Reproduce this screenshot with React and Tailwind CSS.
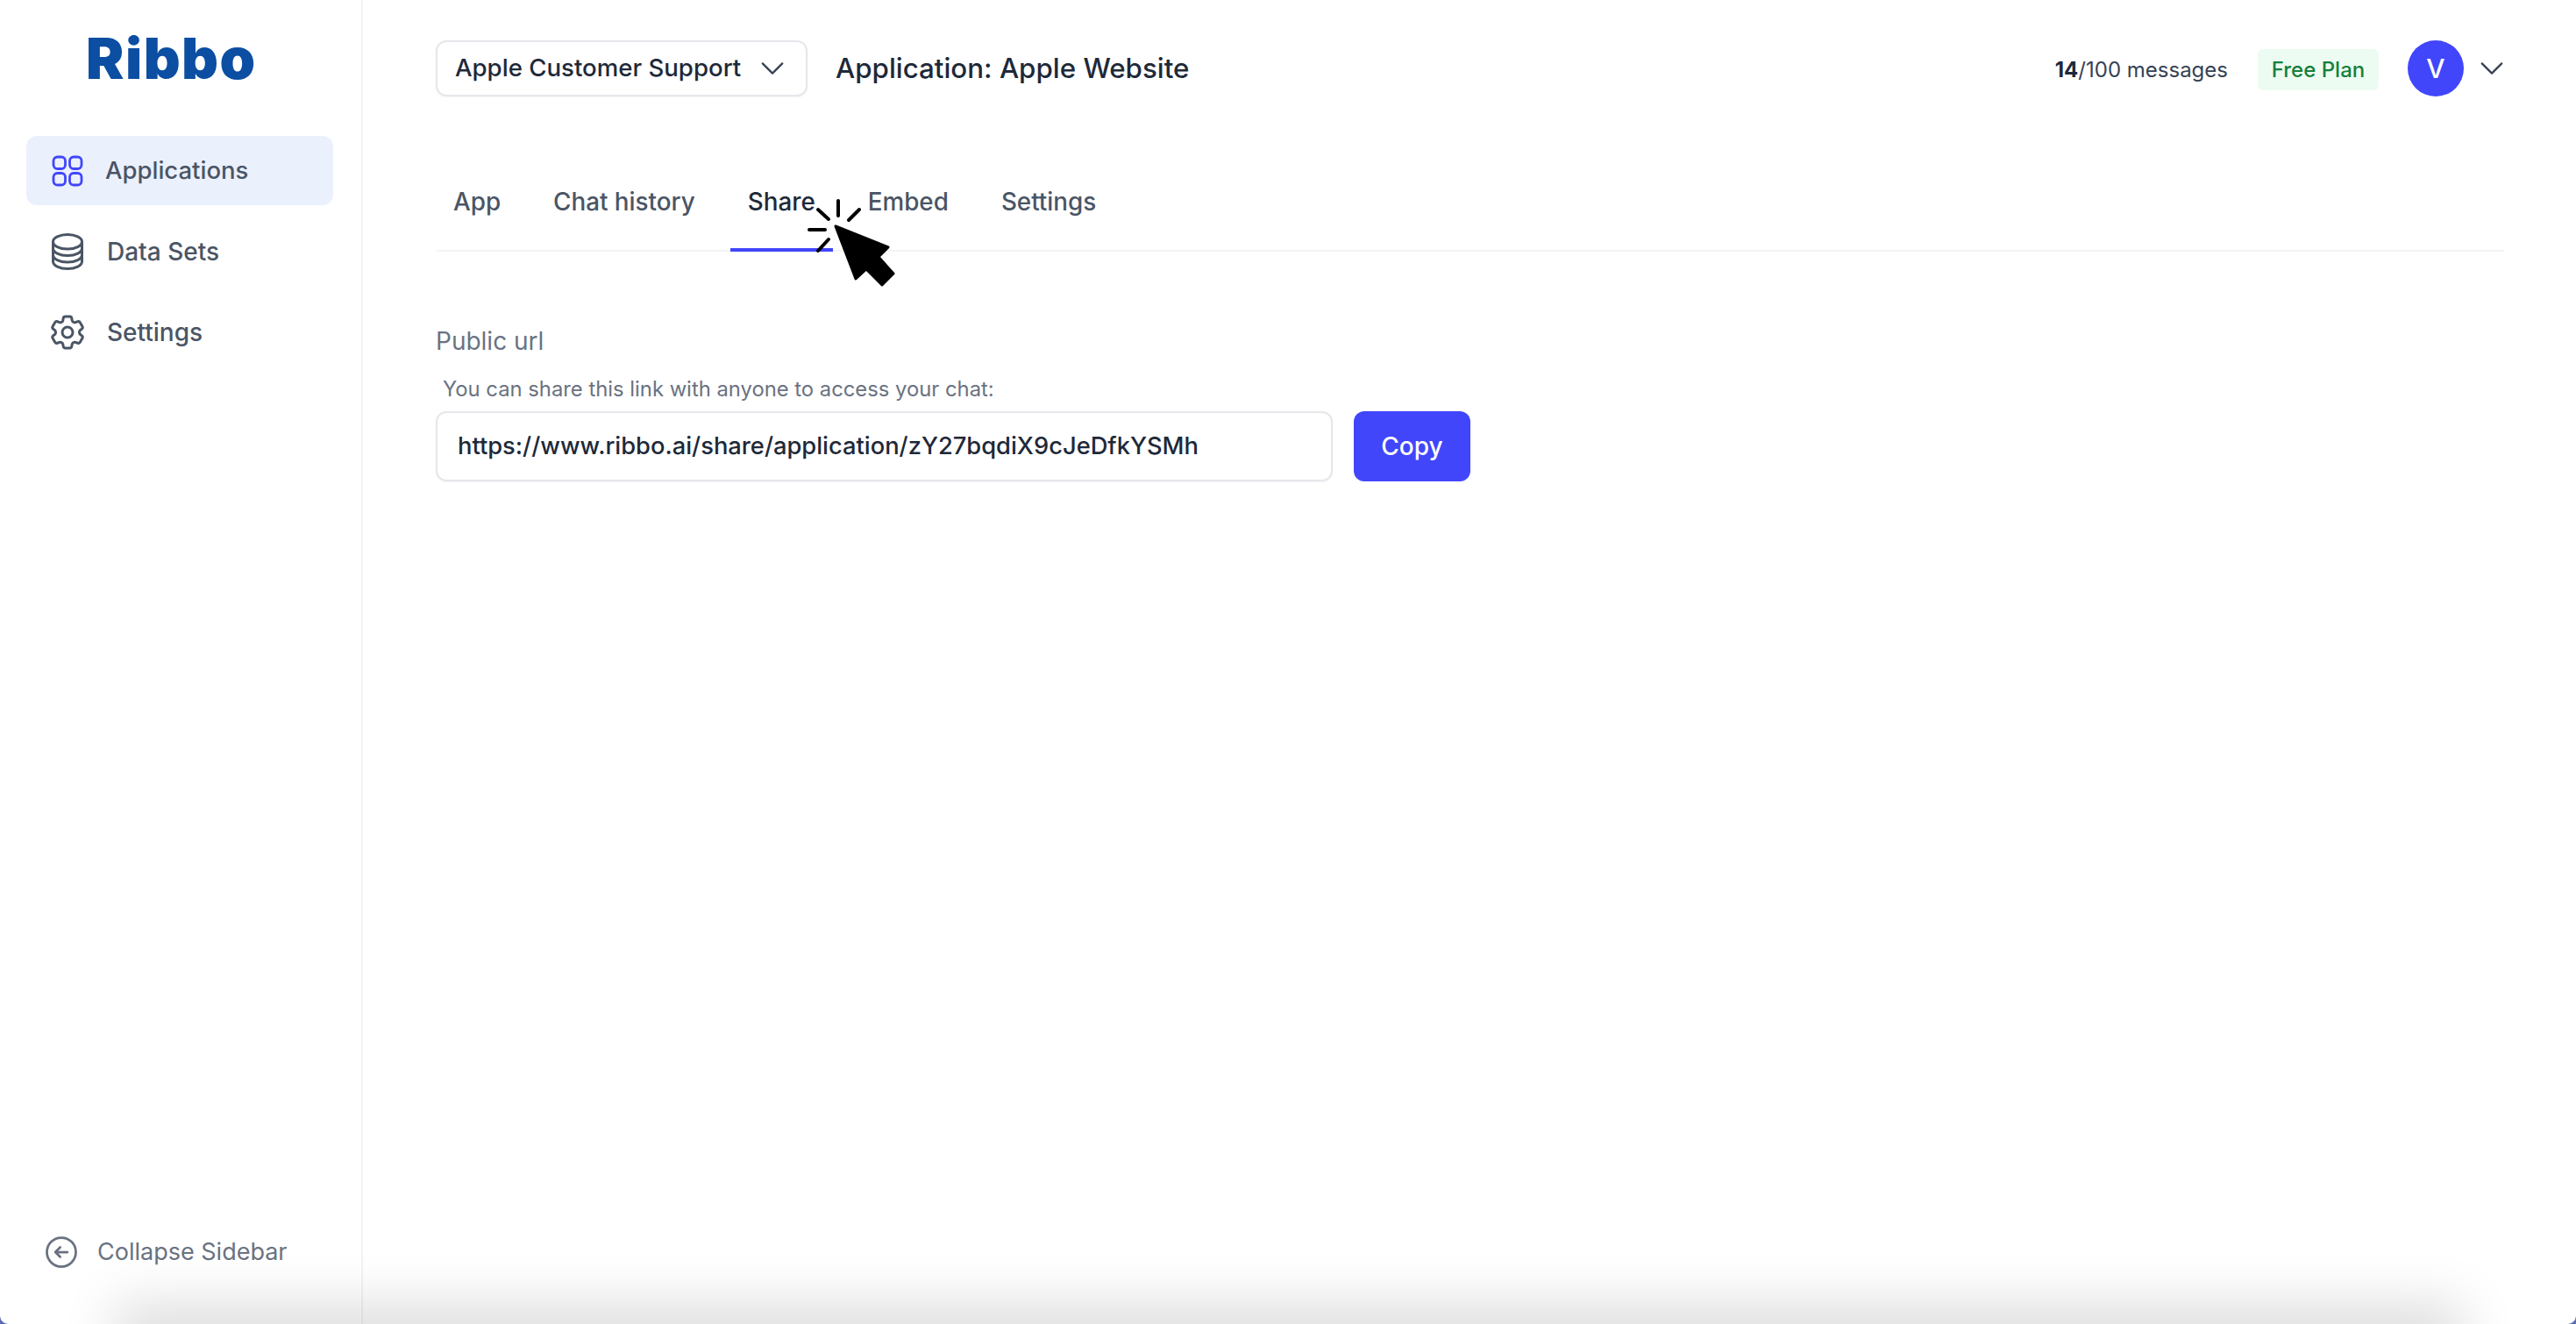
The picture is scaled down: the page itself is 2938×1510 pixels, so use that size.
import React from 'react';
import { HiOutlineChevronDown, HiOutlineCircleStack, HiOutlineCog6Tooth, HiOutlineArrowLeftCircle } from 'react-icons/hi2';

const inter = { fontFamily: 'Inter, sans-serif' };

function AppsIcon() {
  return (
    <svg width="36" height="36" viewBox="0 0 36 36" fill="none" stroke="#4146fb" strokeWidth="2.8">
      <rect x="2" y="2" width="13.5" height="13.5" rx="4.5" />
      <rect x="20.5" y="2" width="13.5" height="13.5" rx="4.5" />
      <rect x="2" y="20.5" width="13.5" height="13.5" rx="4.5" />
      <rect x="20.5" y="20.5" width="13.5" height="13.5" rx="4.5" />
    </svg>
  );
}

function ClickCursor() {
  return (
    <svg className="absolute left-[915px] top-[220px] pointer-events-none" width="115" height="115" viewBox="915 220 115 115" fill="none">
      <path d="M953 258L1013 282L1002 293L1019 312L1006 325L988 307L976 318Z" fill="#000" stroke="#000" strokeWidth="3" strokeLinejoin="round" />
      <g stroke="#000" strokeWidth="4" strokeLinecap="round">
        <path d="M956 229V246" />
        <path d="M968 251L980 239" />
        <path d="M933 239L945 250" />
        <path d="M923 262H941" />
        <path d="M933 286L945 273" />
      </g>
    </svg>
  );
}

export default function App() {
  const nav = [
    { label: 'Applications', icon: <AppsIcon />, active: true },
    { label: 'Data Sets', icon: <HiOutlineCircleStack size={48} className="shrink-0 text-gray-600" /> },
    { label: 'Settings', icon: <HiOutlineCog6Tooth size={48} className="shrink-0 text-gray-600" /> },
  ];
  const tabs = ['App', 'Chat history', 'Share', 'Embed', 'Settings'];

  return (
    <div className="relative flex h-screen overflow-hidden bg-white" style={inter}>
      <aside className="flex w-[414px] shrink-0 flex-col justify-between border-r-2 border-gray-100 pb-[60px]">
        <div>
          <div className="pl-[98px] pt-[29px] text-[65px] leading-[76px] font-black tracking-[1.5px] text-[#0b4ea2]">Ribbo</div>
          <nav className="mt-[50px] flex flex-col gap-[13px] px-[30px]">
            {nav.map(n => (
              <div key={n.label} className={`flex h-[79px] w-[350px] items-center gap-[26px] rounded-xl pl-[28px] text-[28px] font-medium text-gray-600 ${n.active ? 'bg-[#ebf0fd]' : ''}`}>
                <span className="flex w-[38px] justify-center">{n.icon}</span>
                <span className={n.active ? '-ml-[2px] text-[27.5px]' : ''}>{n.label}</span>
              </div>
            ))}
          </nav>
        </div>
        <div className="flex items-center gap-[19px] pl-[48px] text-[27px] text-gray-500">
          <HiOutlineArrowLeftCircle size={44} />
          <span>Collapse Sidebar</span>
        </div>
      </aside>

      <main className="flex-1 pl-[83px] pr-[82px]">
        <header className="flex h-[156px] items-center justify-between">
          <div className="flex items-center gap-[32px]">
            <div className="flex h-[64px] w-[424px] items-center justify-between rounded-xl border-2 border-gray-200 pl-[20px] pr-[20px] text-[27.6px] font-medium text-gray-800 shadow-xs">
              <span>Apple Customer Support</span>
              <HiOutlineChevronDown size={36} className="text-gray-700" />
            </div>
            <div className="mt-[1px] text-[31.3px] font-medium text-gray-800">Application: Apple Website</div>
          </div>
          <div className="flex items-center">
            <div className="mt-[4px] text-[24px] text-gray-700"><span className="font-bold text-gray-800">14</span>/100 messages</div>
            <div className="ml-[34px] mt-[3px] flex h-[47px] w-[138px] items-center justify-center rounded-md bg-[#edfcf2] text-[24px] font-medium text-[#15803d]">Free Plan</div>
            <div className="ml-[33px] flex h-[64px] w-[64px] items-center justify-center rounded-full bg-[#4146fb] text-[30px] font-medium text-white">V</div>
            <HiOutlineChevronDown size={36} className="ml-[14px] -mr-[4px] text-gray-700" />
          </div>
        </header>

        <div className="flex h-[131px] items-end gap-[20px] border-b-2 border-gray-100">
          {tabs.map(t => (
            <div key={t} className={`-mb-[2px] flex h-[78px] items-center border-b-4 px-[20px] pb-[30px] text-[27.8px] font-medium ${t === 'Share' ? 'border-[#4146fb] text-gray-800' : 'border-transparent text-gray-600'}`}>{t}</div>
          ))}
        </div>

        <div className="mt-[84px] text-[28px] leading-[36px] text-gray-500">Public url</div>
        <div className="mt-[21px] pl-[8px] text-[23.8px] leading-[32px] text-gray-500">You can share this link with anyone to access your chat:</div>
        <div className="mt-[9px] flex items-center gap-[24px]">
          <div className="flex h-[80px] w-[1023px] items-center rounded-xl border-2 border-gray-200 pl-[23px] text-[27.3px] font-medium text-gray-800 shadow-xs">https://www.ribbo.ai/share/application/zY27bqdiX9cJeDfkYSMh</div>
          <button className="h-[80px] w-[133px] rounded-xl bg-[#4146fb] text-[28px] font-medium text-white">Copy</button>
        </div>
      </main>

      <ClickCursor />
      <div className="pointer-events-none absolute bottom-[-30px] left-[155px] right-[153px] h-[30px] shadow-[0_0_60px_25px_rgba(0,0,0,0.13)]" />
      <svg className="absolute bottom-0 left-0" width="9" height="9" viewBox="0 0 9 9"><path d="M0 0Q1 8 9 9H0Z" fill="#5d6db5" /></svg>
      <svg className="absolute bottom-0 right-0" width="9" height="9" viewBox="0 0 9 9"><path d="M9 0Q8 8 0 9H9Z" fill="#5d6db5" /></svg>
    </div>
  );
}
